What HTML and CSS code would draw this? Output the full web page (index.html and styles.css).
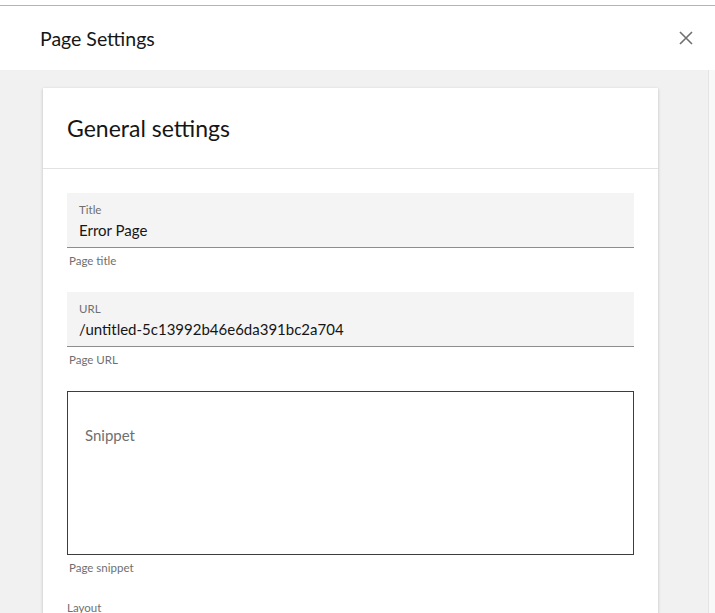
FILE: index.html
```html
<!DOCTYPE html>
<html>
<head>
<meta charset="utf-8">
<link rel="stylesheet" href="styles.css">
</head>
<body>
<div class="modal">
  <header class="modal-header">
    <h1 class="modal-title">Page Settings</h1>
    <button class="close" aria-label="Close">
      <svg width="16" height="16" viewBox="0 0 16 16"><path d="M2 2 L14 14 M14 2 L2 14" stroke="#6f6f6f" stroke-width="1.6" fill="none"/></svg>
    </button>
  </header>
  <div class="modal-body">
    <div class="content">
      <section class="card">
        <div class="card-header">General settings</div>
        <div class="card-body">
          <div class="field">
            <div class="input">
              <span class="input-label">Title</span>
              <span class="input-value">Error Page</span>
            </div>
            <div class="helper">Page title</div>
          </div>
          <div class="field">
            <div class="input">
              <span class="input-label">URL</span>
              <span class="input-value">/untitled-5c13992b46e6da391bc2a704</span>
            </div>
            <div class="helper">Page URL</div>
          </div>
          <div class="field">
            <div class="textarea"><span class="placeholder">Snippet</span></div>
            <div class="helper">Page snippet</div>
          </div>
          <div class="section-label">Layout</div>
        </div>
      </section>
    </div>
    <div class="scrollbar"></div>
  </div>
</div>
</body>
</html>
```
FILE: styles.css
```css
html, body {
  margin: 0;
  padding: 0;
  height: 100%;
  overflow: hidden;
  background: #ffffff;
  font-family: "Lato", "Open Sans", sans-serif;
  color: #161616;
}
body {
  padding-top: 5px;
  box-sizing: border-box;
}
.modal {
  border-top: 1px solid #b4b4b4;
  height: 100%;
  display: flex;
  flex-direction: column;
}
.modal-header {
  height: 64px;
  flex: none;
  display: flex;
  align-items: center;
  justify-content: space-between;
  padding: 0 20px 0 40px;
  background: #fff;
}
.modal-title {
  margin: 0;
  font-size: 19.5px;
  font-weight: 400;
  color: #161616;
}
.close {
  border: 0;
  background: none;
  padding: 0;
  width: 16px;
  height: 16px;
  margin-right: 1px;
  margin-top: -1px;
  display: flex;
}
.modal-body {
  flex: 1;
  display: flex;
  min-height: 0;
}
.content {
  flex: 1;
  background: #f1f1f1;
  padding: 18px 50px 0 43px;
  overflow: hidden;
}
.scrollbar {
  width: 6px;
  border-left: 1px solid #e4e4e4;
  background: #f8f8f8;
}
.card {
  background: #fff;
  box-shadow: 0 1px 3px rgba(0,0,0,0.22);
  min-height: 100%;
}
.card-header {
  height: 80px;
  box-sizing: content-box;
  padding: 0 24px;
  display: flex;
  align-items: center;
  font-size: 23px;
  border-bottom: 1px solid #e2e2e2;
  color: #161616;
}
.card-body {
  padding: 24px 24px 0;
}
.field {
  margin-bottom: 24px;
}
.input {
  background: #f4f4f4;
  border-bottom: 1px solid #8d8d8d;
  height: 55px;
  box-sizing: border-box;
  padding: 10px 12px 0;
  display: flex;
  flex-direction: column;
}
.input-label {
  font-size: 11.5px;
  color: #6f6f6f;
  line-height: 14px;
}
.input-value {
  font-size: 15px;
  line-height: 22px;
  margin-top: 2px;
  color: #161616;
}
.helper {
  font-size: 11.5px;
  color: #6f6f6f;
  padding: 5px 0 0 2px;
  line-height: 15px;
}
.textarea {
  border: 1px solid #3d3d3d;
  height: 164px;
  box-sizing: border-box;
  padding: 33px 17px 0;
}
.placeholder {
  font-size: 15px;
  color: #6f6f6f;
}
.section-label {
  font-size: 11.5px;
  color: #6f6f6f;
  margin-top: 26px;
}
```
